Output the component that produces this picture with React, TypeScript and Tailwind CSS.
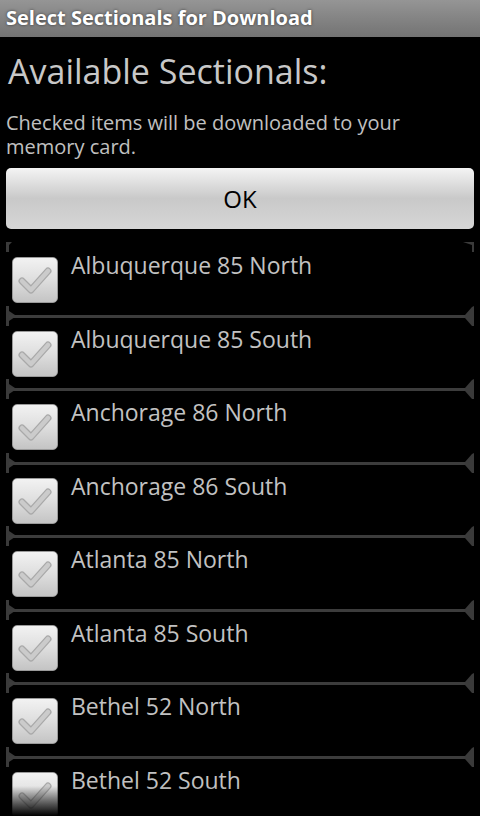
import React from 'react'

const items = [
  'Albuquerque 85 North',
  'Albuquerque 85 South',
  'Anchorage 86 North',
  'Anchorage 86 South',
  'Atlanta 85 North',
  'Atlanta 85 South',
  'Bethel 52 North',
  'Bethel 52 South',
]

const font = { fontFamily: '"Open Sans", "DejaVu Sans", sans-serif' }

// checkbox in the old android style, checked
const CheckBox = () => (
  <div className="w-[46px] h-[46px] rounded-[5px] bg-gradient-to-b from-[#f2f2f2] via-[#dedede] to-[#c4c4c4] border border-[#9a9a9a] flex items-center justify-center">
    <svg width="36" height="36" viewBox="0 0 36 36">
      <path
        d="M5 19 L14 28 L31 9"
        fill="none"
        stroke="#a9a9a9"
        strokeWidth="7"
        strokeLinecap="round"
        strokeLinejoin="round"
      />
      <path
        d="M5 19 L14 28 L31 9"
        fill="none"
        stroke="#cbcbcb"
        strokeWidth="4.5"
        strokeLinecap="round"
        strokeLinejoin="round"
      />
    </svg>
  </div>
)

// the divider with its little wedge ends
const Divider = () => (
  <svg width="468" height="20" viewBox="0 0 468 20" className="block">
    <rect x="0" y="0" width="3" height="20" fill="#3a3a3a" />
    <path d="M3 5 L9 9 L9 11 L3 15 Z" fill="#3a3a3a" />
    <rect x="3" y="9" width="462" height="3" fill="#3c3c3c" />
    <path d="M468 0 L468 20 L466 20 L459 12 L459 9 L466 1 Z" fill="#3a3a3a" />
  </svg>
)

const TopBracket = () => (
  <svg width="468" height="10" viewBox="0 0 468 10" className="block">
    <path d="M0 0 L6 0 L3 3 L3 10 L0 10 Z" fill="#3a3a3a" />
    <path d="M457 0 L468 0 L468 10 L466 10 L466 3 Z" fill="#3a3a3a" />
  </svg>
)

// rows alternate 54/53 so the pitch comes out at ~73.5 like the device
const Row = ({ name, odd }: { name: string; odd: boolean }) => (
  <div className="flex flex-col">
    <div className={odd ? 'h-[53px] flex flex-row items-start' : 'h-[54px] flex flex-row items-start'}>
      <div className="pl-[6px] pt-[5px]">
        <CheckBox />
      </div>
      <div className="pl-[13px] text-[23px] leading-[28px] text-[#c2c2c2] -mt-[1px]">{name}</div>
    </div>
    <Divider />
  </div>
)

export default function App() {
  return (
    <div className="w-[480px] h-[816px] bg-black overflow-hidden relative" style={font}>
      <div className="h-[37px] bg-gradient-to-b from-[#959595] to-[#737373] flex items-center px-[6px]">
        <h1 className="text-[20px] font-bold text-white [text-shadow:0_0_3px_rgba(0,0,0,0.6)] -mt-[1px]">
          Select Sectionals for Download
        </h1>
      </div>

      <div className="px-[6px]">
        <h2 className="text-[34px] leading-[42px] text-[#c8c8c8] mt-[13px] pl-[2px]">Available Sectionals:</h2>
        <p className="text-[20px] leading-[24px] text-[#c0c0c0] mt-[19px]">
          Checked items will be downloaded to your memory card.
        </p>

        <button className="mt-[9px] w-full h-[61px] rounded-[5px] bg-gradient-to-b from-[#f4f4f4] via-[#c9c9c9] to-[#d6d6d6] text-[24px] text-black">
          OK
        </button>

        <div className="mt-[13px]">
          <TopBracket />
          {items.map((it, i) => (
            <Row key={it} name={it} odd={i % 2 === 1} />
          ))}
        </div>
      </div>

      <div className="absolute left-0 right-0 bottom-0 h-[30px] bg-gradient-to-b from-transparent to-black" />
    </div>
  )
}
